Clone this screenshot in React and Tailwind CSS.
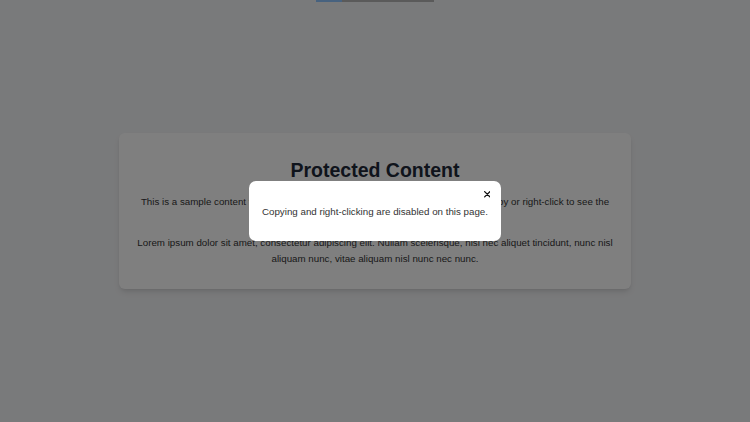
export default function App() {
  return (
    <div className="relative flex h-screen flex-col bg-gray-100 font-['Liberation_Sans',Arial,sans-serif]">
      {/* strip of an element that sits mostly above the fold */}
      <div className="flex h-[2px] justify-center">
        <div className="flex w-[118px]">
          <div className="w-[26px] bg-blue-300" />
          <div className="flex-1 bg-[#b4b4b4]" />
        </div>
      </div>

      <div className="-mt-[2px] flex flex-1 items-center justify-center">
        <div className="w-[512px] rounded-[6px] bg-white px-[14px] pb-[22px] pt-[26px] text-center shadow-md">
          <h1 className="mb-[12px] text-[19.5px] font-bold leading-[23.4px] text-gray-800">
            Protected Content
          </h1>
          <p className="mb-[9.4px] text-[9.75px] leading-[16px] text-[#333]">
            This is a sample content that is protected from copying and text selection. Try to copy
            or right-click to see the popup message.
          </p>
          <p className="text-[9.75px] leading-[16px] text-[#333]">
            Lorem ipsum dolor sit amet, consectetur adipiscing elit. Nullam scelerisque, nisl nec
            aliquet tincidunt, nunc nisl aliquam nunc, vitae aliquam nisl nunc nec nunc.
          </p>
        </div>
      </div>

      <div className="fixed inset-0 flex items-center justify-center bg-black/50">
        <div className="rounded-[7px] bg-white px-[12.5px] pb-[20.7px] pt-[9px]">
          <div className="flex h-[8px] items-center justify-end">
            <button className="-mr-[3px] flex h-[8px] w-[8px] items-center justify-center">
              <svg viewBox="0 0 10 10" className="h-[6.5px] w-[6.5px]">
                <path d="M1 1 L9 9 M9 1 L1 9" stroke="#111" strokeWidth="2" strokeLinecap="round" />
              </svg>
            </button>
          </div>
          <p className="mt-[5.4px] text-[9.75px] leading-[16px] text-[#333]">
            Copying and right-clicking are disabled on this page.
          </p>
        </div>
      </div>
    </div>
  );
}
